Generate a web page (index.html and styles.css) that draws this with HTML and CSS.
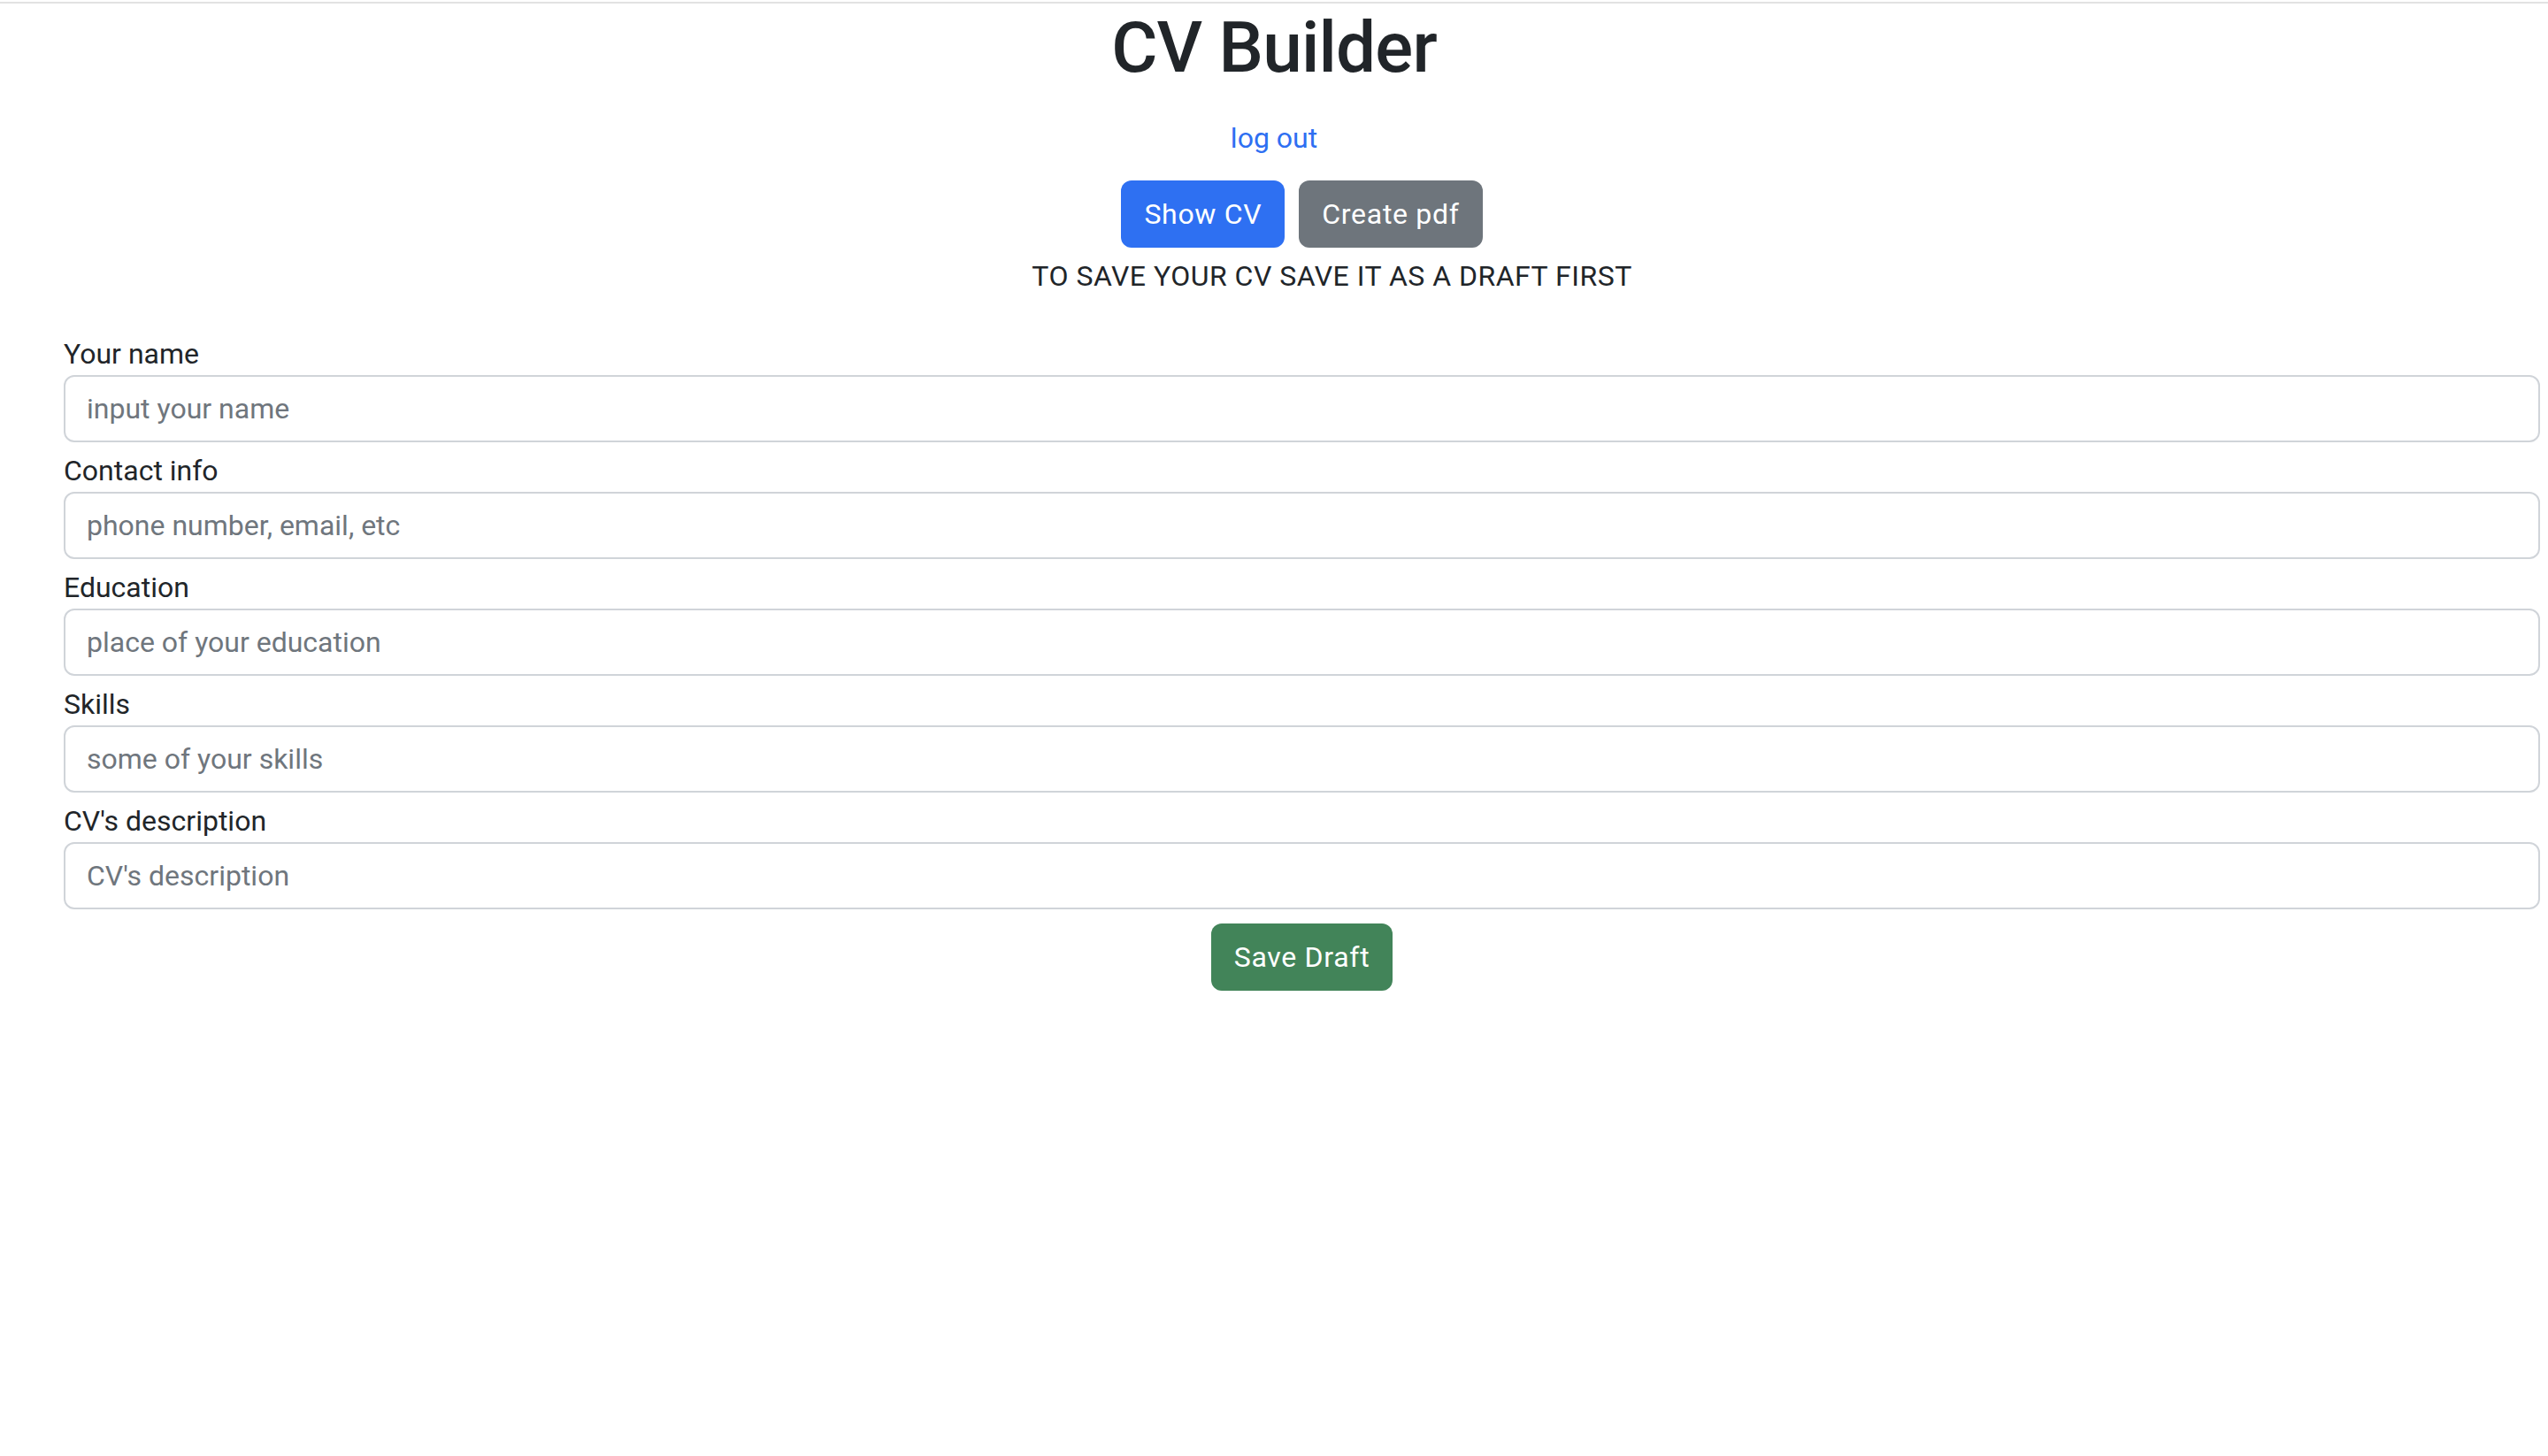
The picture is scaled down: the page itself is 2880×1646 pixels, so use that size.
FILE: index.html
```html
<!DOCTYPE html>
<html lang="en">
<head>
    <meta charset="UTF-8">
    <meta name="viewport" content="width=device-width, initial-scale=1.0">
    <title>CV Builder</title>
    <link rel="stylesheet" href="styles.css">
</head>
<body>
    <div class="topline"></div>
    <h1 class="title">CV Builder</h1>
    <div class="logout"><a href="#">log out</a></div>

    <main class="builder">
        <div class="actions">
            <button type="button" class="btn btn-blue">Show CV</button>
            <button type="button" class="btn btn-gray">Create pdf</button>
        </div>
        <p class="notice">TO SAVE YOUR CV SAVE IT AS A DRAFT FIRST</p>

        <form class="cv-form">
            <label for="name">Your name</label>
            <input type="text" id="name" placeholder="input your name">

            <label for="contact">Contact info</label>
            <input type="text" id="contact" placeholder="phone number, email, etc">

            <label for="education">Education</label>
            <input type="text" id="education" placeholder="place of your education">

            <label for="skills">Skills</label>
            <input type="text" id="skills" placeholder="some of your skills">

            <label for="description">CV's description</label>
            <input type="text" id="description" placeholder="CV's description">

            <div class="submit-row">
                <button type="button" class="btn btn-green">Save Draft</button>
            </div>
        </form>
    </main>
</body>
</html>
```

FILE: styles.css
```css
body {
    margin: 0;
    font-family: Roboto, "Liberation Sans", Arial, sans-serif;
    font-size: 32px;
    line-height: 1.5;
    color: #212529;
    background-color: #fff;
}
.topline {
    height: 2px;
    margin-top: 2px;
    background-color: #e2e2e2;
}
.title {
    margin: 2px 0 30px;
    font-size: 80px;
    font-weight: 500;
    line-height: 96px;
    letter-spacing: -0.8px;
    text-align: center;
}
.logout {
    text-align: center;
}
.logout a {
    color: #2e6ff2;
    text-decoration: none;
}
.builder {
    margin: 0 9px 0 72px;
}
.actions {
    display: flex;
    justify-content: center;
    gap: 16px;
    margin-top: 24px;
}
.btn {
    padding: 12px 24px;
    border: 2px solid transparent;
    border-radius: 12px;
    font-family: inherit;
    font-size: 32px;
    line-height: 48px;
    letter-spacing: 0.7px;
    color: #fff;
    cursor: pointer;
}
.btn-blue {
    background-color: #2e70f2;
}
.btn-gray {
    background-color: #6e757c;
}
.btn-green {
    background-color: #428459;
}
.notice {
    margin: 8px 0 0;
    padding-left: 68px;
    letter-spacing: 0.5px;
    text-align: center;
}
.cv-form {
    margin-top: 40px;
}
.cv-form label {
    display: block;
}
.cv-form input {
    display: block;
    width: 100%;
    box-sizing: border-box;
    margin: 0 0 8px;
    padding: 12px 24px;
    border: 2px solid #d0d4d9;
    border-radius: 12px;
    font-family: inherit;
    font-size: 32px;
    line-height: 48px;
    color: #212529;
}
.cv-form input::placeholder {
    color: #6f767d;
}
.submit-row {
    display: flex;
    justify-content: center;
    margin-top: 16px;
}
```
